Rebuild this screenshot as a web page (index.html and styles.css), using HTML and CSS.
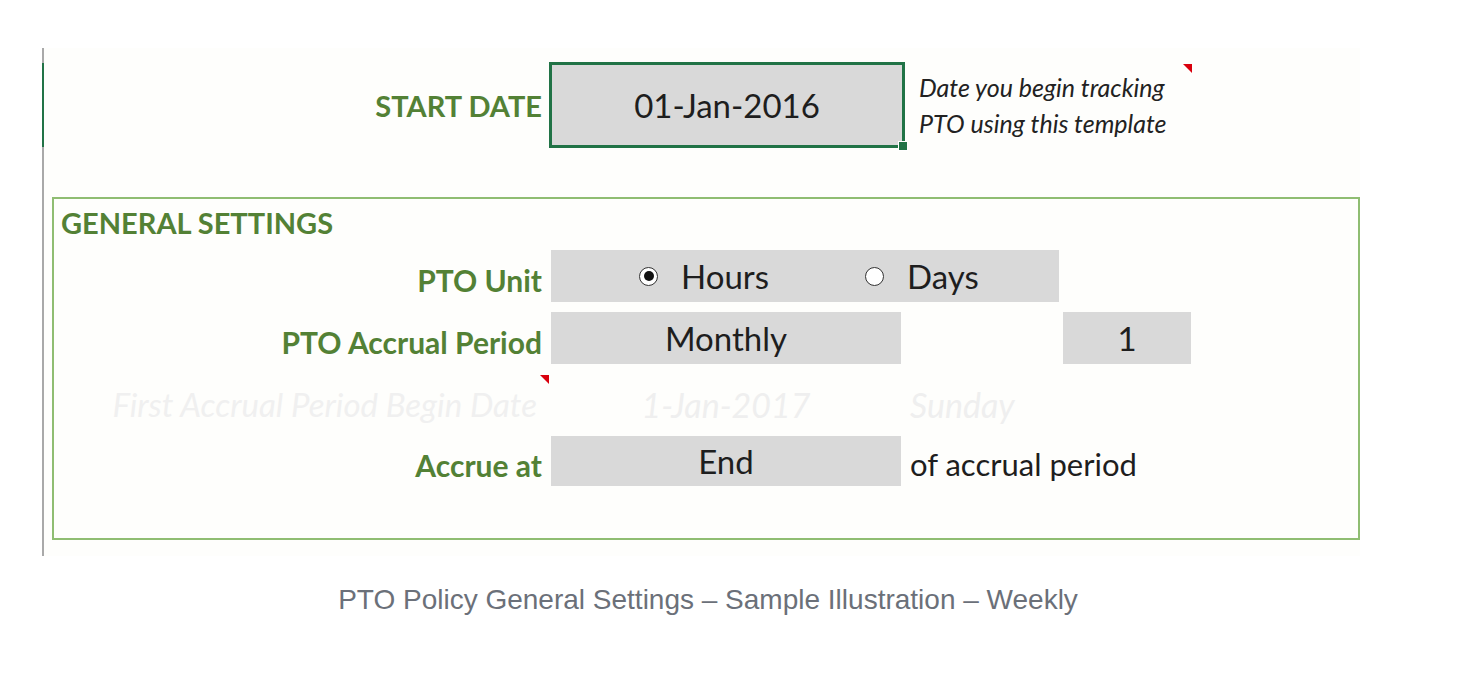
FILE: index.html
```html
<!DOCTYPE html>
<html>
<head>
    <title>PTO Policy General Settings</title>
    <link rel="stylesheet" href="styles.css">
</head>
<body>
  <figure class="figure">
    <div class="sheet">
      <div class="start-row">
        <div class="start-label">START DATE</div>
        <div class="start-cell">01-Jan-2016<span class="fill-handle"></span></div>
        <div class="start-note">
          Date you begin tracking<br>PTO using this template
          <span class="comment-mark"></span>
        </div>
      </div>

      <section class="settings">
        <h2>GENERAL SETTINGS</h2>
        <div class="settings-grid">
          <div class="label">PTO Unit</div>
          <div class="cell cell-unit">
            <span class="radio checked"></span><span class="radio-text">Hours</span>
            <span class="radio radio-days"></span><span class="radio-text">Days</span>
          </div>
          <div></div>

          <div class="label">PTO Accrual Period</div>
          <div class="cell">Monthly</div>
          <div></div>
          <div class="cell">1</div>

          <!-- hidden row, only visible when weekly -->
          <div class="label faded">First Accrual Period Begin Date<span class="comment-mark"></span></div>
          <div class="faded-value">1-Jan-2017</div>
          <div class="faded-day">Sunday</div>
          <div></div>

          <div class="label">Accrue at</div>
          <div class="cell">End</div>
          <div class="after-text">of accrual period</div>
        </div>
      </section>
    </div>
    <figcaption>PTO Policy General Settings – Sample Illustration – Weekly</figcaption>
  </figure>
</body>
</html>
```

FILE: styles.css
```css
* {
    margin: 0;
    padding: 0;
    box-sizing: border-box;
}

body {
    font-family: Lato, "Open Sans", sans-serif;
    background-color: #fff;
}

.figure {
    margin: 48px 0 0 42px;
    width: 1318px;
}

.sheet {
    position: relative;
    height: 508px;
    background-color: #fefefc;
    border-left: 2px solid #a9a9a9;
}

/* selected row marker on the left edge */
.sheet::before {
    content: "";
    position: absolute;
    left: -2px;
    top: 15px;
    width: 2px;
    height: 84px;
    background-color: #217346;
}

.start-row {
    display: flex;
    align-items: center;
    padding-top: 14px;
}

.start-label {
    width: 505px;
    padding-right: 7px;
    text-align: right;
    font-size: 29px;
    font-weight: 700;
    color: #538135;
}

.start-cell {
    position: relative;
    width: 356px;
    height: 86px;
    display: flex;
    align-items: center;
    justify-content: center;
    background-color: #d9d9d9;
    border: 3px solid #217346;
    font-size: 33px;
    color: #1e1e1e;
}

.fill-handle {
    position: absolute;
    right: -6px;
    bottom: -6px;
    width: 10px;
    height: 10px;
    background-color: #217346;
    border: 1px solid #fff;
}

.start-note {
    position: relative;
    width: 273px;
    margin-left: 14px;
    font-size: 25px;
    font-style: italic;
    line-height: 36px;
    color: #222;
}

.start-note .comment-mark {
    top: -5px;
    right: 0;
}

.comment-mark {
    position: absolute;
    width: 0;
    height: 0;
    border-top: 9px solid #d9000d;
    border-left: 9px solid transparent;
}

.settings {
    margin: 49px 0 0 8px;
    width: 1308px;
    height: 343px;
    border: 2px solid #8fbd72;
}

.settings h2 {
    margin-top: 6px;
    padding-left: 7px;
    font-size: 29px;
    font-weight: 700;
    line-height: 36px;
    color: #538135;
}

.settings-grid {
    display: grid;
    grid-template-columns: 497px 350px 162px 128px;
    grid-template-rows: 52px 52px 52px 50px;
    row-gap: 10px;
    margin-top: 9px;
}

.label {
    position: relative;
    display: flex;
    align-items: center;
    justify-content: flex-end;
    padding-right: 9px;
    padding-top: 8px;
    font-size: 30px;
    font-weight: 700;
    color: #538135;
    white-space: nowrap;
}

.cell {
    display: flex;
    align-items: center;
    justify-content: center;
    background-color: #d9d9d9;
    font-size: 33px;
    color: #1e1e1e;
}

.cell-unit {
    grid-column: 2 / 4;
    width: 508px;
    justify-content: flex-start;
    padding-left: 88px;
}

.radio {
    width: 19px;
    height: 19px;
    border-radius: 50%;
    border: 1.5px solid #333;
    background-color: #fff;
    display: flex;
    align-items: center;
    justify-content: center;
}

.radio.checked::after {
    content: "";
    width: 10px;
    height: 10px;
    border-radius: 50%;
    background-color: #111;
}

.radio-text {
    margin-left: 23px;
}

.radio-days {
    margin-left: 96px;
}

.label.faded {
    font-size: 33px;
    font-weight: 400;
    font-style: italic;
    color: #f0f0f0;
    padding-right: 14px;
}

.label.faded .comment-mark {
    top: 1px;
    right: 2px;
}

.faded-value,
.faded-day {
    display: flex;
    align-items: center;
    padding-top: 8px;
    font-size: 34px;
    font-style: italic;
    color: #efefef;
}

.faded-value {
    justify-content: center;
}

.faded-day {
    padding-left: 9px;
}

.after-text {
    display: flex;
    align-items: center;
    padding-left: 9px;
    padding-top: 6px;
    font-size: 31px;
    color: #1e1e1e;
    white-space: nowrap;
}

.figure figcaption {
    margin-top: 28px;
    padding-left: 14px;
    text-align: center;
    font-family: "Liberation Sans", Arial, sans-serif;
    font-size: 28px;
    line-height: 32px;
    color: #6b7079;
}
```
